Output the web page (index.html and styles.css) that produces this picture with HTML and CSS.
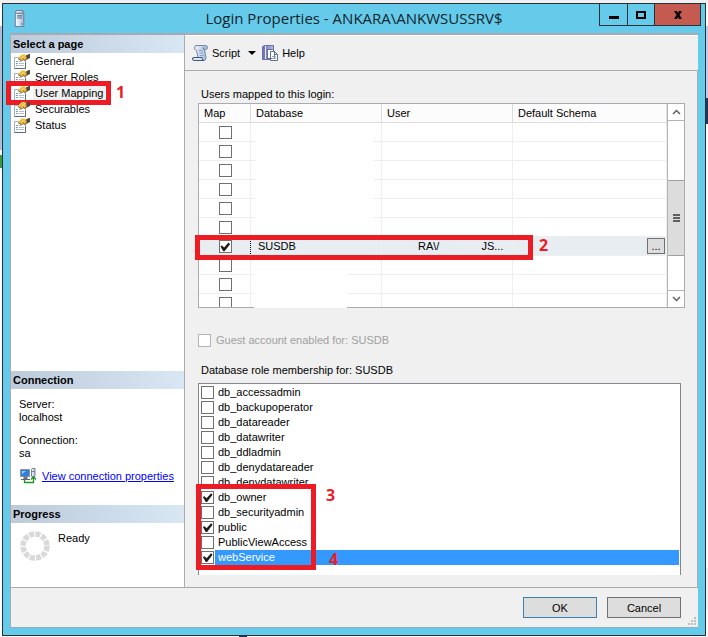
FILE: index.html
```html
<!DOCTYPE html>
<html lang="en">
<head>
<meta charset="utf-8">
<title>Login Properties - ANKARA\ANKWSUSSRV$</title>
<link rel="stylesheet" href="styles.css">
</head>
<body>
<svg class="defs" aria-hidden="true">
  <defs>
    <linearGradient id="scroll" x1="0" x2="1"><stop offset="0" stop-color="#fff"/><stop offset="1" stop-color="#9db6dc"/></linearGradient>
    <linearGradient id="book" x1="0" x2="1"><stop offset="0" stop-color="#6a6bb0"/><stop offset="1" stop-color="#b9bce6"/></linearGradient>
    <linearGradient id="tower" x1="0" x2="1"><stop offset="0" stop-color="#fff"/><stop offset="1" stop-color="#a9b9d2"/></linearGradient>
    <symbol id="page" viewBox="0 0 16 16">
      <path d="M.5 4.500h11v11H.5z" fill="#fff" stroke="#9db0cc"/>
      <path d="M.5 15.500h11v-6" fill="none" stroke="#5a6b80"/>
      <path d="M2 8h2v1H2zM2 10h2v1H2zM2 12h2v1H2z" fill="#7d9fd0"/>
      <path d="M5 10h5v1H5zM5 12h5v1H5zM5 8h2v1H5z" fill="#b4c0d0"/>
      <path d="M4 5 7.500 1.500 10 1l3 1.500V6l-2 1.500L9 6.500 7.500 8z" fill="#e2b03a"/>
      <path d="M4.500 5 7.500 2l2.500-.500 2 1M7 5.500l2-2 2 1" stroke="#fbe68c" fill="none"/>
      <path d="M4 5.500 7.500 8 9 6.500l2 1 2-1.500" fill="none" stroke="#7a6428"/>
      <path d="m12 2.500 3-1.500h1v4l-3 1.500z" fill="#4f4a38"/>
    </symbol>
  </defs>
</svg>
<div class="dialog">
  <header class="titlebar">
    <svg class="server" viewBox="0 0 10 16" aria-hidden="true">
      <path d="m1.500 2.500 1-2h6l1 2v13h-8z" fill="url(#tower)" stroke="#6f819b"/>
      <path d="M2 3h7M3 5.500h5M3 7.500h5" stroke="#56708f"/>
      <path d="M7 12h1v2H7z" fill="#4a8ad0"/>
    </svg>
    <h1>Login Properties - ANKARA\ANKWSUSSRV$</h1>
    <div class="window-buttons">
      <button type="button" class="minimize" aria-label="Minimize"><svg viewBox="0 0 12 10"><path d="M1 6h10v3H1z"/></svg></button>
      <button type="button" class="maximize" aria-label="Maximize"><svg viewBox="0 0 12 10"><path d="M2 2h8v6H2z" fill="none" stroke="#000" stroke-width="2"/></svg></button>
      <button type="button" class="close" aria-label="Close"><svg viewBox="0 0 12 10"><path d="M2 1h3l1 2 1-2h3L7.500 5 10 9H7L6 7 5 9H2l2.500-4z"/></svg></button>
    </div>
  </header>

  <div class="client">
    <div class="panes">
      <aside class="sidebar">
        <nav class="pages">
          <h2>Select a page</h2>
          <ul>
            <li><svg class="icon"><use href="#page"/></svg><a href="#general">General</a></li>
            <li><svg class="icon"><use href="#page"/></svg><a href="#roles">Server Roles</a></li>
            <li class="current"><svg class="icon"><use href="#page"/></svg><a href="#mapping">User Mapping</a><span class="frame frame-page"></span><b class="mark mark-page">1</b></li>
            <li><svg class="icon"><use href="#page"/></svg><a href="#securables">Securables</a></li>
            <li><svg class="icon"><use href="#page"/></svg><a href="#status">Status</a></li>
          </ul>
        </nav>
        <section class="connection">
          <h2>Connection</h2>
          <dl>
            <dt>Server:</dt><dd>localhost</dd>
            <dt>Connection:</dt><dd>sa</dd>
          </dl>
          <p class="link-row">
            <svg class="icon" viewBox="0 0 16 16" aria-hidden="true">
              <path d="M.5 1.500h9v7h-9z" fill="#2f7fe0" stroke="#8b93a0"/>
              <path d="M2 3h4L2 6z" fill="#9fd0ff"/>
              <path d="M4 9h3v2H4zM1 11.500h9" stroke="#5c6675" fill="#8b93a0"/>
              <path d="M11.500 1.500 12 .5h3v8h-3.500z" fill="url(#tower)" stroke="#7a8799"/>
              <path d="M12 3.500h3" stroke="#7a8799"/>
              <path d="M4.500 12v2.500h9V9M11 11.500l2.500-2.500 2.500 2.500" fill="none" stroke="#1f941f" stroke-width="1.300"/>
            </svg>
            <a href="#connection">View connection properties</a>
          </p>
        </section>
        <section class="progress">
          <h2>Progress</h2>
          <div class="status">
            <svg viewBox="0 0 30 30" aria-hidden="true"><circle cx="15" cy="15" r="12" fill="none" stroke="#d9d9d9" stroke-width="5.500" stroke-dasharray="5.083 1.200"/></svg>
            <span>Ready</span>
          </div>
        </section>
      </aside>

      <main>
        <div class="toolbar">
          <button type="button">
            <svg class="icon" viewBox="0 0 16 16" aria-hidden="true">
              <path d="M4 .5h9.500q2 0 2 2T13.500 4.500h-1l1.500 8q0 3-2 3H2.500q-2 0-2-1.500T2 12.500h4L4.500 5.500Q2.500 5 2.500 3T4 .5z" fill="url(#scroll)" stroke="#7288a8"/>
              <path d="M6.500 5.500h4M7 8h4M7.500 10.500h4" stroke="#8fa5c8"/>
              <path d="M12.500 4.500q-1.500-.5-1-2" fill="none" stroke="#3f5676"/>
              <path d="M2 12.500h8q0 3 2 3H2.500q-2 0-2-1.500T2 12.500z" fill="#dce7f6" stroke="#3f5676"/>
            </svg>
            <span>Script</span><i class="caret"></i>
          </button>
          <button type="button">
            <svg class="icon" viewBox="0 0 16 16" aria-hidden="true">
              <path d="M.5 1.500 3 .5h8.500v12L9 14.500H.5z" fill="url(#book)" stroke="#6c6ea6"/>
              <path d="M3.500 1v13" stroke="#e4e6fa"/>
              <path d="M5.500 4.500h5l2 2v7h-7zM8.500 6.500h4l3 3v6h-7z" fill="#fff" stroke="#5b7390"/>
              <path d="M12.500 6.500v3h3" fill="none" stroke="#5b7390"/>
              <path d="M10 11.500h4M10 13.500h4" stroke="#8fa8c8"/>
            </svg>
            <span>Help</span>
          </button>
        </div>

        <div class="content">
          <p class="caption" id="mapped">Users mapped to this login:</p>
          <div class="grid">
            <div class="viewport">
              <table aria-labelledby="mapped">
                <colgroup><col class="c-map"><col class="c-db"><col class="c-user"><col></colgroup>
                <thead><tr><th>Map</th><th>Database</th><th>User</th><th>Default Schema</th></tr></thead>
                <tbody>
                  <tr><td><input type="checkbox" aria-label="Map"></td><td></td><td></td><td></td></tr>
                  <tr><td><input type="checkbox" aria-label="Map"></td><td></td><td></td><td></td></tr>
                  <tr><td><input type="checkbox" aria-label="Map"></td><td></td><td></td><td></td></tr>
                  <tr><td><input type="checkbox" aria-label="Map"></td><td></td><td></td><td></td></tr>
                  <tr><td><input type="checkbox" aria-label="Map"></td><td></td><td></td><td></td></tr>
                  <tr><td><input type="checkbox" aria-label="Map"></td><td></td><td></td><td></td></tr>
                  <tr class="selected"><td><input type="checkbox" aria-label="Map" checked></td><td>SUSDB</td><td><div class="user"><span>RA\/</span><span>JS...</span></div></td><td><button type="button" class="browse">...</button></td></tr>
                  <tr><td><input type="checkbox" aria-label="Map"></td><td></td><td></td><td></td></tr>
                  <tr><td><input type="checkbox" aria-label="Map"></td><td></td><td></td><td></td></tr>
                  <tr><td><input type="checkbox" aria-label="Map"></td><td></td><td></td><td></td></tr>
                </tbody>
              </table>
            </div>
            <div class="scrollbar">
              <button type="button" aria-label="Scroll up"><svg viewBox="0 0 9 6"><path d="m1 5 3.500-3.500L8 5"/></svg></button>
              <div class="track"><div class="thumb"></div></div>
              <button type="button" aria-label="Scroll down"><svg viewBox="0 0 9 6"><path d="m1 1 3.500 3.500L8 1"/></svg></button>
            </div>
            <span class="blank blank-top"></span>
            <span class="blank blank-bottom"></span>
            <span class="frame frame-row"></span>
            <b class="mark mark-row">2</b>
          </div>

          <label class="guest"><input type="checkbox" disabled>Guest account enabled for: SUSDB</label>

          <p class="caption">Database role membership for: SUSDB</p>
          <div class="roles">
            <label><input type="checkbox"><span>db_accessadmin</span></label>
            <label><input type="checkbox"><span>db_backupoperator</span></label>
            <label><input type="checkbox"><span>db_datareader</span></label>
            <label><input type="checkbox"><span>db_datawriter</span></label>
            <label><input type="checkbox"><span>db_ddladmin</span></label>
            <label><input type="checkbox"><span>db_denydatareader</span></label>
            <label><input type="checkbox"><span>db_denydatawriter</span></label>
            <label><input type="checkbox" checked><span>db_owner</span></label>
            <label><input type="checkbox"><span>db_securityadmin</span></label>
            <label><input type="checkbox" checked><span>public</span></label>
            <label><input type="checkbox"><span>PublicViewAccess</span></label>
            <label class="active"><input type="checkbox" checked><span>webService</span></label>
            <span class="frame frame-roles"></span>
            <b class="mark mark-owner">3</b>
            <b class="mark mark-service">4</b>
          </div>
        </div>
      </main>
    </div>

    <footer>
      <button type="button" class="push default">OK</button>
      <button type="button" class="push">Cancel</button>
      <svg class="grip" viewBox="0 0 8 8" aria-hidden="true"><path d="M6 0h2v2H6zM3 3h2v2H3zM6 3h2v2H6zM0 6h2v2H0zM3 6h2v2H3zM6 6h2v2H6z"/></svg>
    </footer>
  </div>
</div>
</body>
</html>
```

FILE: styles.css
```css
* { box-sizing: border-box; }

body {
  margin: 0;
  min-height: 100vh;
  display: flex;
  padding: 3px 2px 2px;
  font: 11px/14px "Liberation Sans", Arial, sans-serif;
  color: #000;
  background:
    linear-gradient(#26344f, #26344f) 239px 100% / 8px 2px no-repeat,
    linear-gradient(#26344f, #26344f) 100% 98px / 2px 26px no-repeat,
    linear-gradient(#c3cbdc, #c3cbdc) 100% 26px / 2px 72px no-repeat,
    linear-gradient(#f0f0f0, #f0f0f0) 100% 568px / 2px 42px no-repeat,
    linear-gradient(#3c9a3c, #3c9a3c) 0 155px / 2px 13px no-repeat,
    linear-gradient(#b4bdd0, #b4bdd0) 0 26px / 2px 124px no-repeat,
    linear-gradient(#f0f0f0, #f0f0f0) 0 0 / 100% 3px no-repeat,
    #fff;
}

h1, h2, p, ul, dl, dd { margin: 0; padding: 0; }
ul { list-style: none; }
button { font: inherit; color: inherit; padding: 0; }
.defs { position: absolute; width: 0; height: 0; }
.icon { width: 16px; height: 16px; flex: none; }

.dialog {
  flex: 1;
  display: flex;
  flex-direction: column;
  padding: 0 7px 7px;
  border: 1px solid #26323a;
  background: #66cbea;
}

.titlebar {
  position: relative;
  display: flex;
  align-items: center;
  justify-content: center;
  height: 29px;
  padding-bottom: 2px;
}
.titlebar h1 { font: 15px/20px "Open Sans", "Noto Sans", sans-serif; color: #10242c; }
.server { position: absolute; left: 3px; top: 6px; width: 12px; height: 17px; }

.window-buttons { position: absolute; top: -1px; right: -3px; display: flex; }
.window-buttons button {
  height: 23px;
  display: grid;
  place-items: center;
  border: 1px solid #26323a;
  background: #66cbea;
}
.window-buttons svg { width: 12px; height: 10px; }
.minimize { width: 29px; }
.window-buttons .maximize { width: 27px; border-left: 0; }
.window-buttons .close { width: 46px; border-left: 0; background: #c45a50; }

.client {
  flex: 1;
  display: flex;
  flex-direction: column;
  border-top: 2px solid #a5abb0;
  border-left: 1px solid #a5abb0;
  border-bottom: 1px solid #8fb0bd;
  background: #f0f0f0;
}
.panes { flex: 1; display: flex; border-bottom: 1px solid #a8abb0; }

.sidebar {
  width: 174px;
  flex: none;
  display: flex;
  flex-direction: column;
  background: #fff;
  border-right: 1px solid #a8abb0;
}
.sidebar h2 {
  height: 18px;
  padding-left: 2px;
  font: bold 11px/18px "Liberation Sans", Arial, sans-serif;
  background: linear-gradient(90deg, #bccada, #d9e6f4);
}
.pages { flex: 1; }
.pages li { position: relative; display: flex; align-items: center; height: 16px; padding-left: 3px; gap: 3px; }
.pages a { padding: 0 2px; line-height: 14px; color: #000; text-decoration: none; }
.pages .current a { background: #f0f0f0; }

.connection { height: 134px; }
.connection dl { padding: 9px 8px 0; line-height: 13px; }
.connection dd { margin-bottom: 10px; }
.connection dd:last-child { margin-bottom: 8px; }
.link-row { display: flex; gap: 6px; align-items: center; padding-left: 9px; }
.link-row a { color: #00f; }

.progress { height: 82px; }
.status { display: flex; gap: 8px; padding: 8px 9px; }
.status svg { width: 30px; height: 30px; }

main { flex: 1; min-width: 0; }
.toolbar { display: flex; gap: 6px; height: 36px; padding: 0 7px; align-items: center; border-top: 1px solid #fff; border-bottom: 1px solid #a8abb0; }
.toolbar button { display: flex; align-items: center; gap: 4px; border: 0; background: none; }
.caret { margin-left: 4px; border: 4px solid transparent; border-top-color: #000; border-bottom: 0; }

.content { padding: 16px 12px 12px 13px; border-right: 1px solid #a8abb0; }
.caption { padding-left: 3px; line-height: 14px; }

.grid { position: relative; display: flex; height: 205px; margin-top: 2px; border: 1px solid #a8abb0; background: #fff; }
.viewport { flex: 1; overflow: hidden; }
table { width: 100%; table-layout: fixed; border-collapse: separate; border-spacing: 0; }
.c-map { width: 52px; }
.c-db, .c-user { width: 131px; }
th { height: 19px; padding: 0 5px; text-align: left; font-weight: normal; background: #fcfcfc; border-right: 1px solid #dcdcdc; border-bottom: 1px solid #dcdcdc; }
td { height: 19px; padding: 0 7px; border-right: 1px solid #eee; border-bottom: 1px solid #eee; line-height: 14px; }
td:first-child { padding: 0 0 0 1px; text-align: center; }
td:last-child { padding: 0 1px; text-align: right; }
.selected td { background: #e8edf1; }
.selected td:first-child { border-right: 1px dotted #000; }
.user { display: flex; gap: 42px; padding-left: 29px; }
.browse { display: block; width: 18px; height: 16px; margin-left: auto; border: 1px solid #707070; background: #ddd; line-height: 12px; }

input[type="checkbox"] {
  appearance: none;
  flex: none;
  display: inline-block;
  vertical-align: middle;
  width: 13px;
  height: 13px;
  margin: 0;
  border: 1px solid #707070;
  background: #fff;
}
input[type="checkbox"]:checked::before {
  content: "";
  display: block;
  width: 11px;
  height: 11px;
  background: #1c1c1c;
  clip-path: polygon(8% 46%, 22% 38%, 42% 56%, 82% 12%, 96% 26%, 46% 90%, 34% 90%);
}
input[type="checkbox"]:disabled { border-color: #b4b4b4; }

.scrollbar { width: 17px; display: flex; flex-direction: column; border-left: 1px solid #b4b4b4; }
.scrollbar button { height: 17px; display: grid; place-items: center; border: 0; border-bottom: 1px solid #b4b4b4; background: #fff; }
.scrollbar button:last-child { border-bottom: 0; border-top: 1px solid #b4b4b4; }
.scrollbar svg { width: 9px; height: 6px; fill: none; stroke: #606060; stroke-width: 1.5; }
.track { flex: 1; padding-top: 59px; }
.thumb {
  height: 76px;
  border: 1px solid #a0a0a0;
  border-width: 1px 0;
  background: repeating-linear-gradient(#606060 0 2px, #dcdcdc 2px 3px) center / 7px 8px no-repeat, #dcdcdc;
}

.blank { position: absolute; background: #fff; }
.blank-top { left: 57px; top: 20px; width: 117px; height: 113px; }
.blank-bottom { left: 55px; top: 155px; width: 93px; height: 49px; }

.guest { display: flex; align-items: center; gap: 5px; margin-top: 25px; color: #a0a0a0; }
.guest + .caption { margin-top: 16px; }

.roles { position: relative; height: 192px; margin: 6px 4px 0 0; padding: 1px 1px 0 2px; border: 1px solid #828790; border-bottom: 0; background: #fff; }
.roles label { display: flex; align-items: center; gap: 1px; height: 15px; }
.roles label span { flex: 1; padding-left: 3px; line-height: 15px; }
.roles .active span { background: #3399ff; color: #fff; }

.frame { position: absolute; border: 5px solid #ed1c24; }
.frame-page { left: -5px; top: -4px; width: 105px; height: 24px; }
.frame-row { left: -4px; top: 131px; width: 338px; height: 25px; }
.frame-roles { left: -3px; top: 100px; width: 120px; height: 86px; }
.mark { position: absolute; font: bold 16px/18px "Open Sans", "Noto Sans", sans-serif; color: #ed1c24; }
.mark-page { left: 105px; top: -2px; }
.mark-row { left: 340px; top: 132px; }
.mark-owner { left: 127px; top: 102px; }
.mark-service { left: 130px; top: 166px; }

footer { position: relative; display: flex; justify-content: flex-end; gap: 10px; padding: 9px 17px; }
.push { width: 74px; height: 21px; border: 1px solid #707070; background: #ddd; }
.push.default { border-color: #3c7fb1; }
.grip { position: absolute; right: 2px; bottom: 2px; width: 8px; height: 8px; fill: #bfbfbf; }
```
